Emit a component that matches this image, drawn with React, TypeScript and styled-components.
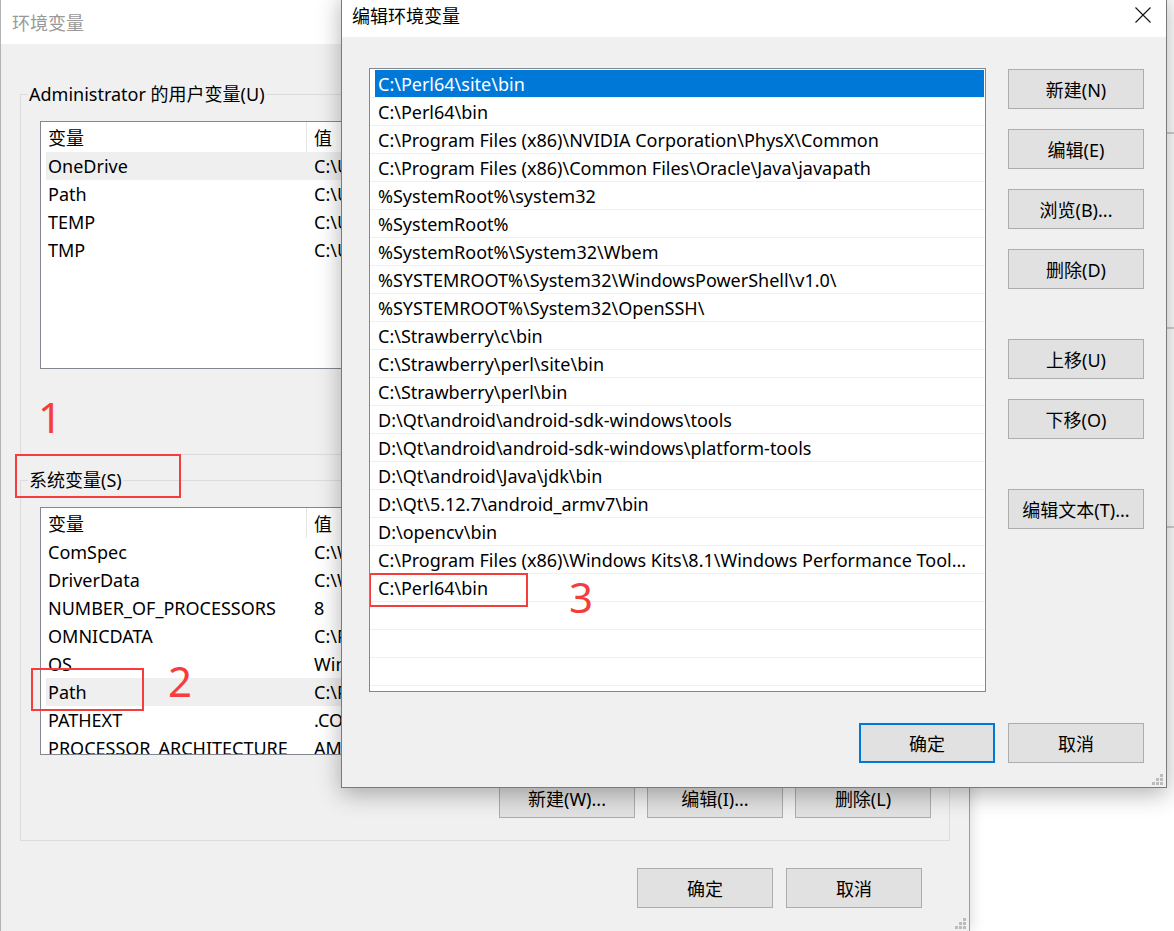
import React from "react";
import styled, { createGlobalStyle } from "styled-components";

const FONT = `"Noto Sans", "Noto Sans CJK SC", sans-serif`;
const RED = "#f53d3d";

const GlobalStyle = createGlobalStyle`
  html, body {
    margin: 0;
    padding: 0;
    background: #fff;
    overflow: hidden;
  }
  body {
    font-family: ${FONT};
    font-size: 18px;
    color: #000;
  }
  * {
    box-sizing: border-box;
  }
`;

const Desktop = styled.div`
  position: relative;
  width: 1174px;
  height: 931px;
  overflow: hidden;
  background: #fff;
`;

/* ---------- window chrome ---------- */

const BackWindow = styled.section`
  position: absolute;
  left: 0;
  top: 0;
  width: 970px;
  height: 931px;
  background: #f0f0f0;
  border-left: 1px solid #b4b4b4;
  border-right: 1px solid #9c9c9c;
  box-shadow: 0 0 14px rgba(0, 0, 0, 0.18);
  display: flex;
  flex-direction: column;
`;

const EditDialog = styled.section`
  position: absolute;
  left: 341px;
  top: -8px;
  width: 826px;
  height: 796px;
  background: #f0f0f0;
  border: 1px solid #7a7a7a;
  box-shadow: 0 6px 22px rgba(0, 0, 0, 0.3);
  display: flex;
  flex-direction: column;
`;

const RightWindow = styled.div`
  position: absolute;
  left: 1167px;
  top: 0;
  width: 20px;
  height: 931px;
  display: flex;
  flex-direction: column;
`;

const EdgeLine = styled.div<{ $top: number }>`
  margin-top: ${(p) => p.$top}px;
  height: 2px;
  background: #cfcfcf;
`;

const TitleBar = styled.header<{ $inactive?: boolean }>`
  height: 44px;
  flex: none;
  background: #fff;
  display: flex;
  align-items: center;
  justify-content: space-between;
  padding-left: ${(p) => (p.$inactive ? 11 : 10)}px;
  color: ${(p) => (p.$inactive ? "#999" : "#000")};
  font-size: 18px;
`;

const CloseButton = styled.div`
  width: 47px;
  height: 44px;
  display: flex;
  align-items: center;
  justify-content: center;
`;

const Grip = styled.svg`
  position: absolute;
  right: 3px;
  bottom: 2px;
`;

function SizeGrip() {
  const dots = [
    [8, 0],
    [4, 4],
    [8, 4],
    [0, 8],
    [4, 8],
    [8, 8],
  ];
  return (
    <Grip width="11" height="11" viewBox="0 0 11 11">
      {dots.map(([x, y]) => (
        <rect key={`${x}-${y}`} x={x} y={y} width="3" height="3" fill="#bcbcbc" />
      ))}
    </Grip>
  );
}

/* ---------- buttons ---------- */

const Button = styled.button<{ $default?: boolean; $spaced?: boolean }>`
  width: 136px;
  height: 40px;
  flex: none;
  margin: ${(p) => (p.$spaced ? "30px 0 0" : "0")};
  padding: 0;
  background: #e1e1e1;
  border: ${(p) => (p.$default ? "2px solid #0078d7" : "1px solid #adadad")};
  border-radius: 0;
  font-family: ${FONT};
  font-size: 18px;
  color: #000;
`;

const ButtonRow = styled.div<{ $gap: number; $padRight?: number; $top: number }>`
  display: flex;
  justify-content: flex-end;
  gap: ${(p) => p.$gap}px;
  margin-top: ${(p) => p.$top}px;
  padding-right: ${(p) => p.$padRight ?? 0}px;
`;

/* ---------- back window: variable lists ---------- */

const BackBody = styled.div`
  position: relative;
  flex: 1;
  padding: 0 19px;
`;

const Group = styled.fieldset<{ $top: number }>`
  margin: ${(p) => p.$top}px 0 0;
  padding: 15px 18px 22px 7px;
  border: 1px solid #dcdcdc;
  min-width: 0;
`;

const GroupLabel = styled.legend`
  padding: 0 1px;
  line-height: 24px;
  font-size: 18px;
`;

const VarList = styled.div`
  margin-left: 12px;
  height: 248px;
  background: #fff;
  border: 1px solid #828790;
  overflow: hidden;
`;

const VarHeader = styled.div`
  display: grid;
  grid-template-columns: 266px 1fr;
  height: 30px;
`;

const HeaderCell = styled.div<{ $sep?: boolean }>`
  display: flex;
  align-items: center;
  padding-left: 7px;
  border-right: ${(p) => (p.$sep ? "1px solid #e5e5e5" : "none")};
`;

const VarRow = styled.div<{ $active?: boolean }>`
  display: grid;
  grid-template-columns: 266px 1fr;
  height: 28px;
  margin-left: 5px;
  align-items: center;
  background: ${(p) => (p.$active ? "#efefef" : "transparent")};
`;

const VarCell = styled.span`
  padding-left: 2px;
  white-space: nowrap;
  overflow: hidden;
`;

/* ---------- edit dialog ---------- */

const EditBody = styled.div`
  position: relative;
  flex: 1;
  display: grid;
  grid-template-columns: 617px 136px;
  grid-template-rows: 624px auto;
  column-gap: 22px;
  row-gap: 31px;
  padding: 31px 22px 0 27px;
`;

const PathList = styled.div`
  position: relative;
  background: #fff;
  border: 1px solid #828790;
  padding-top: 1px;
  overflow: hidden;
`;

const PathRow = styled.div`
  display: flex;
  height: 28px;
  padding-left: 5px;
  border-bottom: 1px solid #f0f0f0;
`;

const PathItem = styled.div<{ $selected?: boolean }>`
  flex: 1;
  min-width: 0;
  margin-right: 1px;
  padding-left: 3px;
  display: flex;
  align-items: center;
  white-space: nowrap;
  overflow: hidden;
  background: ${(p) => (p.$selected ? "#0078d7" : "transparent")};
  color: ${(p) => (p.$selected ? "#fff" : "#000")};
`;

const SideButtons = styled.div`
  display: flex;
  flex-direction: column;
  gap: 20px;
  padding-top: 1px;
`;

const EditFooter = styled.div`
  grid-column: 1 / -1;
  display: flex;
  justify-content: flex-end;
  gap: 13px;
`;

/* ---------- red annotations ---------- */

const RedBox = styled.div<{ $x: number; $y: number; $w: number; $h: number }>`
  position: absolute;
  left: ${(p) => p.$x}px;
  top: ${(p) => p.$y}px;
  width: ${(p) => p.$w}px;
  height: ${(p) => p.$h}px;
  border: 2px solid ${RED};
  pointer-events: none;
`;

const RedNum = styled.div<{ $x: number; $y: number }>`
  position: absolute;
  left: ${(p) => p.$x}px;
  top: ${(p) => p.$y}px;
  font-family: "Noto Sans", sans-serif;
  font-size: 42px;
  line-height: 42px;
  font-weight: 400;
  color: ${RED};
`;

/* ---------- data ---------- */

const userVars = [
  ["OneDrive", "C:\\Users\\Administrator\\OneDrive"],
  ["Path", "C:\\Users\\Administrator\\AppData\\Local\\Microsoft\\WindowsApps;"],
  ["TEMP", "C:\\Users\\Administrator\\AppData\\Local\\Temp"],
  ["TMP", "C:\\Users\\Administrator\\AppData\\Local\\Temp"],
];

const systemVars = [
  ["ComSpec", "C:\\WINDOWS\\system32\\cmd.exe"],
  ["DriverData", "C:\\Windows\\System32\\Drivers\\DriverData"],
  ["NUMBER_OF_PROCESSORS", "8"],
  ["OMNICDATA", "C:\\ProgramData\\Thermo\\OMNIC"],
  ["OS", "Windows_NT"],
  ["Path", "C:\\Perl64\\site\\bin;C:\\Perl64\\bin;"],
  ["PATHEXT", ".COM;.EXE;.BAT;.CMD;.VBS;.VBE;.JS"],
  ["PROCESSOR_ARCHITECTURE", "AMD64"],
  ["PROCESSOR_IDENTIFIER", "Intel64 Family 6 Model 158"],
];

const paths = [
  "C:\\Perl64\\site\\bin",
  "C:\\Perl64\\bin",
  "C:\\Program Files (x86)\\NVIDIA Corporation\\PhysX\\Common",
  "C:\\Program Files (x86)\\Common Files\\Oracle\\Java\\javapath",
  "%SystemRoot%\\system32",
  "%SystemRoot%",
  "%SystemRoot%\\System32\\Wbem",
  "%SYSTEMROOT%\\System32\\WindowsPowerShell\\v1.0\\",
  "%SYSTEMROOT%\\System32\\OpenSSH\\",
  "C:\\Strawberry\\c\\bin",
  "C:\\Strawberry\\perl\\site\\bin",
  "C:\\Strawberry\\perl\\bin",
  "D:\\Qt\\android\\android-sdk-windows\\tools",
  "D:\\Qt\\android\\android-sdk-windows\\platform-tools",
  "D:\\Qt\\android\\Java\\jdk\\bin",
  "D:\\Qt\\5.12.7\\android_armv7\\bin",
  "D:\\opencv\\bin",
  "C:\\Program Files (x86)\\Windows Kits\\8.1\\Windows Performance Tool...",
  "C:\\Perl64\\bin",
  "",
  "",
  "",
];

function VariableTable({ rows, active }: { rows: string[][]; active: string }) {
  return (
    <VarList>
      <VarHeader>
        <HeaderCell $sep>变量</HeaderCell>
        <HeaderCell>值</HeaderCell>
      </VarHeader>
      {rows.map(([name, value]) => (
        <VarRow key={name} $active={name === active}>
          <VarCell>{name}</VarCell>
          <VarCell>{value}</VarCell>
        </VarRow>
      ))}
    </VarList>
  );
}

export default function App() {
  return (
    <Desktop>
      <GlobalStyle />

      <RightWindow>
        <EdgeLine $top={132} />
        <EdgeLine $top={193} />
        <EdgeLine $top={197} />
      </RightWindow>

      <BackWindow>
        <TitleBar $inactive>环境变量</TitleBar>
        <BackBody>
          <Group $top={38}>
            <GroupLabel>Administrator 的用户变量(U)</GroupLabel>
            <VariableTable rows={userVars} active="OneDrive" />
            <ButtonRow $gap={12} $top={23}>
              <Button>新建(N)...</Button>
              <Button>编辑(E)...</Button>
              <Button>删除(D)</Button>
            </ButtonRow>
          </Group>

          <Group $top={13}>
            <GroupLabel>系统变量(S)</GroupLabel>
            <VariableTable rows={systemVars} active="Path" />
            <ButtonRow $gap={12} $top={23}>
              <Button>新建(W)...</Button>
              <Button>编辑(I)...</Button>
              <Button>删除(L)</Button>
            </ButtonRow>
          </Group>

          <ButtonRow $gap={13} $top={27} $padRight={28}>
            <Button>确定</Button>
            <Button>取消</Button>
          </ButtonRow>
        </BackBody>

        <RedNum $x={37} $y={396}>1</RedNum>
        <RedBox $x={14} $y={454} $w={166} $h={44} />
        <RedNum $x={167} $y={660}>2</RedNum>
        <RedBox $x={30} $y={668} $w={113} $h={43} />
        <SizeGrip />
      </BackWindow>

      <EditDialog>
        <TitleBar>
          编辑环境变量
          <CloseButton>
            <svg width="16" height="16" viewBox="0 0 16 16">
              <path d="M0.5 0.5 L15.5 15.5 M15.5 0.5 L0.5 15.5" stroke="#111" strokeWidth="1.1" fill="none" />
            </svg>
          </CloseButton>
        </TitleBar>
        <EditBody>
          <PathList>
            {paths.map((p, i) => (
              <PathRow key={i}>
                <PathItem $selected={i === 0}>{p}</PathItem>
              </PathRow>
            ))}
            <RedBox $x={-1} $y={504} $w={159} $h={34} />
            <RedNum $x={199} $y={507}>3</RedNum>
          </PathList>
          <SideButtons>
            <Button>新建(N)</Button>
            <Button>编辑(E)</Button>
            <Button>浏览(B)...</Button>
            <Button>删除(D)</Button>
            <Button $spaced>上移(U)</Button>
            <Button>下移(O)</Button>
            <Button $spaced>编辑文本(T)...</Button>
          </SideButtons>
          <EditFooter>
            <Button $default>确定</Button>
            <Button>取消</Button>
          </EditFooter>
        </EditBody>
        <SizeGrip />
      </EditDialog>
    </Desktop>
  );
}
